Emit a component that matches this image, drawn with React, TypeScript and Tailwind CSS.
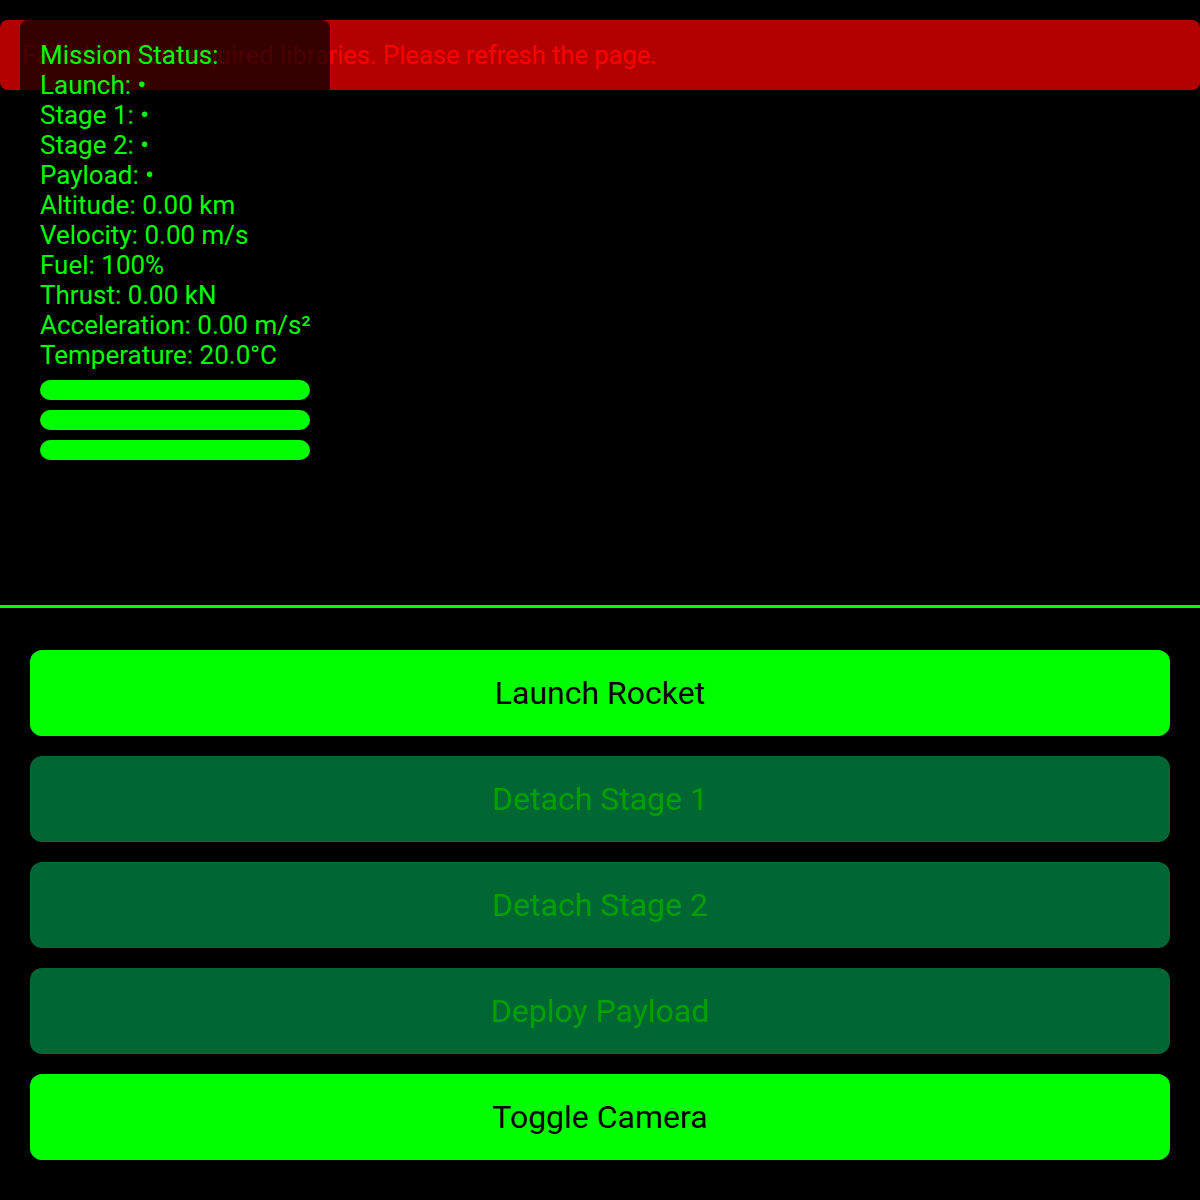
import React from 'react';

const stats = [
  'Mission Status:',
  'Launch: •',
  'Stage 1: •',
  'Stage 2: •',
  'Payload: •',
  'Altitude: 0.00 km',
  'Velocity: 0.00 m/s',
  'Fuel: 100%',
  'Thrust: 0.00 kN',
  'Acceleration: 0.00 m/s²',
  'Temperature: 20.0°C',
];

const buttons = [
  { label: 'Launch Rocket', enabled: true },
  { label: 'Detach Stage 1', enabled: false },
  { label: 'Detach Stage 2', enabled: false },
  { label: 'Deploy Payload', enabled: false },
  { label: 'Toggle Camera', enabled: true },
];

export default function App() {
  return (
    <div
      className="relative w-[1200px] h-[1200px] bg-black flex flex-col"
      style={{ fontFamily: 'Roboto, "Noto Sans", sans-serif' }}
    >
      {/* 3D view area */}
      <div className="h-[608px] shrink-0 border-b-[3px] border-[#00ff00] bg-black" />

      {/* Controls */}
      <div className="flex flex-col gap-5 px-[30px] pt-[42px]">
        {buttons.map((b) => (
          <button
            key={b.label}
            disabled={!b.enabled}
            className={
              b.enabled
                ? 'h-[86px] rounded-xl bg-[#00ff00] text-black text-[32px]'
                : 'h-[86px] rounded-xl bg-[#006633] text-[#00a000] text-[32px]'
            }
          >
            {b.label}
          </button>
        ))}
      </div>

      {/* Error banner */}
      <div className="absolute top-5 left-0 right-0 h-[70px] rounded-lg bg-[#b30000] text-[#ff0000] text-[25.5px] flex items-center px-[22px]">
        Failed to load required libraries. Please refresh the page.
      </div>

      {/* Mission status panel */}
      <div className="absolute top-5 left-5 w-[310px] p-5 rounded-lg bg-black/70 text-[#00ff00] text-[26px] leading-[30px]">
        {stats.map((s) => (
          <div key={s} className="whitespace-nowrap">{s}</div>
        ))}
        <div className="mt-[10px] h-5 rounded-full bg-[#00ff00]" />
        <div className="mt-[10px] h-5 rounded-full bg-[#00ff00]" />
        <div className="mt-[10px] h-5 rounded-full bg-[#00ff00]" />
      </div>
    </div>
  );
}
